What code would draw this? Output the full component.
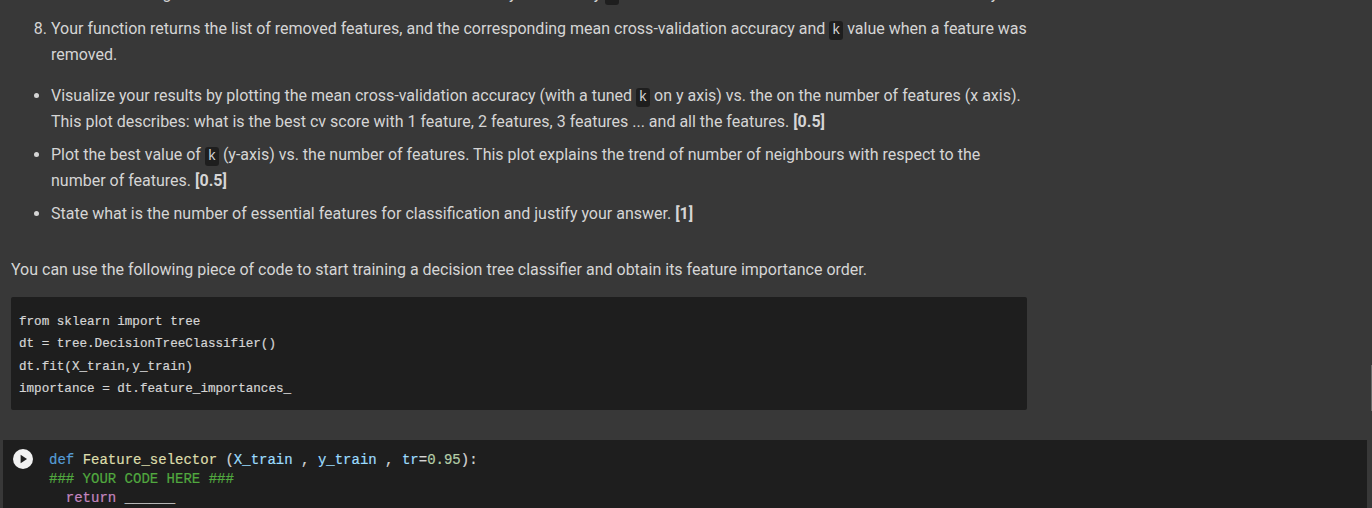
<div class="page">
  <div class="md">
    <ol start="7">
      <li class="prev">Redo the training and evaluation for the newer reduced dataset by a tuned key <code>k</code> and then end when no more columns are left or to try.</li>
      <li>Your function returns the list of removed features, and the corresponding mean cross-validation accuracy and <code>k</code> value when a feature was removed.</li>
    </ol>
    <ul>
      <li>Visualize your results by plotting the mean cross-validation accuracy (with a tuned <code>k</code> on y axis) vs. the on the number of features (x axis). This plot describes: what is the best cv score with 1 feature, 2 features, 3 features ... and all the features. <strong>[0.5]</strong></li>
      <li>Plot the best value of <code>k</code> (y-axis) vs. the number of features. This plot explains the trend of number of neighbours with respect to the number of features. <strong>[0.5]</strong></li>
      <li>State what is the number of essential features for classification and justify your answer. <strong>[1]</strong></li>
    </ul>
    <p>You can use the following piece of code to start training a decision tree classifier and obtain its feature importance order.</p>
    <pre class="block">from sklearn import tree
dt = tree.DecisionTreeClassifier()
dt.fit(X_train,y_train)
importance = dt.feature_importances_</pre>
  </div>
  <div class="cell">
    <div class="gutter">
      <svg class="run" viewBox="0 0 20 20" width="20" height="20" aria-hidden="true">
        <circle cx="10" cy="10" r="10" fill="#f1f1f1" />
        <path d="M7.6 5.8v8.4l6.4-4.2z" fill="#1e1e1e" />
      </svg>
    </div>
    <pre class="src"><span class="kw">def</span> <span class="fn">Feature_selector</span> (<span class="par">X_train</span> , <span class="par">y_train</span> , <span class="par">tr</span>=<span class="num">0.95</span>):
<span class="com">### YOUR CODE HERE ###</span>
  <span class="ret">return</span> ______</pre>
  </div>
  <div class="edge"></div>
</div>

<style>
  :global(body) { margin: 0; background: #383838; overflow: hidden; }
  .page {
    position: relative;
    width: 1372px;
    height: 508px;
    overflow: hidden;
    background: #383838;
    color: #d5d5d5;
    font-family: Roboto, "Liberation Sans", sans-serif;
    font-size: 16px;
    line-height: 25.6px;
  }
  .md { width: 1016px; margin: -19px 0 30px 11px; }
  ol, ul { margin: 0; padding-left: 40px; }
  ol { margin-right: -6px; margin-bottom: 16px; }
  li { margin-bottom: 7.8px; }
  li.prev { margin-bottom: 9.4px; }
  li:last-child { margin-bottom: 0; }
  p { margin: 30.6px 0 0; }
  code {
    font-family: "Liberation Mono", monospace;
    font-size: 14px;
    line-height: 1;
    background: #1e1e1e;
    border-radius: 3px;
    padding: 1px 2.8px 2px;
  }
  strong { font-weight: 700; }
  .block {
    margin: 14px 0 0;
    height: 113px;
    box-sizing: border-box;
    padding: 14px 8px 0;
    background: #1e1e1e;
    border-radius: 2px;
    font-family: "Liberation Mono", monospace;
    font-size: 12.6px;
    line-height: 22.3px;
    color: #d5d5d5;
    -webkit-text-stroke: 0.2px #d5d5d5;
  }
  .cell {
    display: flex;
    margin-left: 3px;
    width: 1364px;
    height: 68px;
    background: #1e1e1e;
  }
  .gutter { width: 46px; flex: none; padding: 9px 0 0 10px; box-sizing: border-box; }
  .run { display: block; }
  .src {
    margin: 0;
    padding-top: 11px;
    font-family: "Liberation Mono", monospace;
    font-size: 14px;
    line-height: 19px;
    color: #d4d4d4;
    -webkit-text-stroke: 0.2px;
  }
  .kw { color: #569cd6; }
  .fn { color: #dcdcaa; }
  .par { color: #9cdcfe; }
  .num { color: #b5cea8; }
  .com { color: #51a83f; }
  .ret { color: #c586c0; }
  .edge {
    position: absolute;
    right: 0;
    top: 365px;
    width: 1px;
    height: 46px;
    background: #6a6a6a;
  }
</style>
